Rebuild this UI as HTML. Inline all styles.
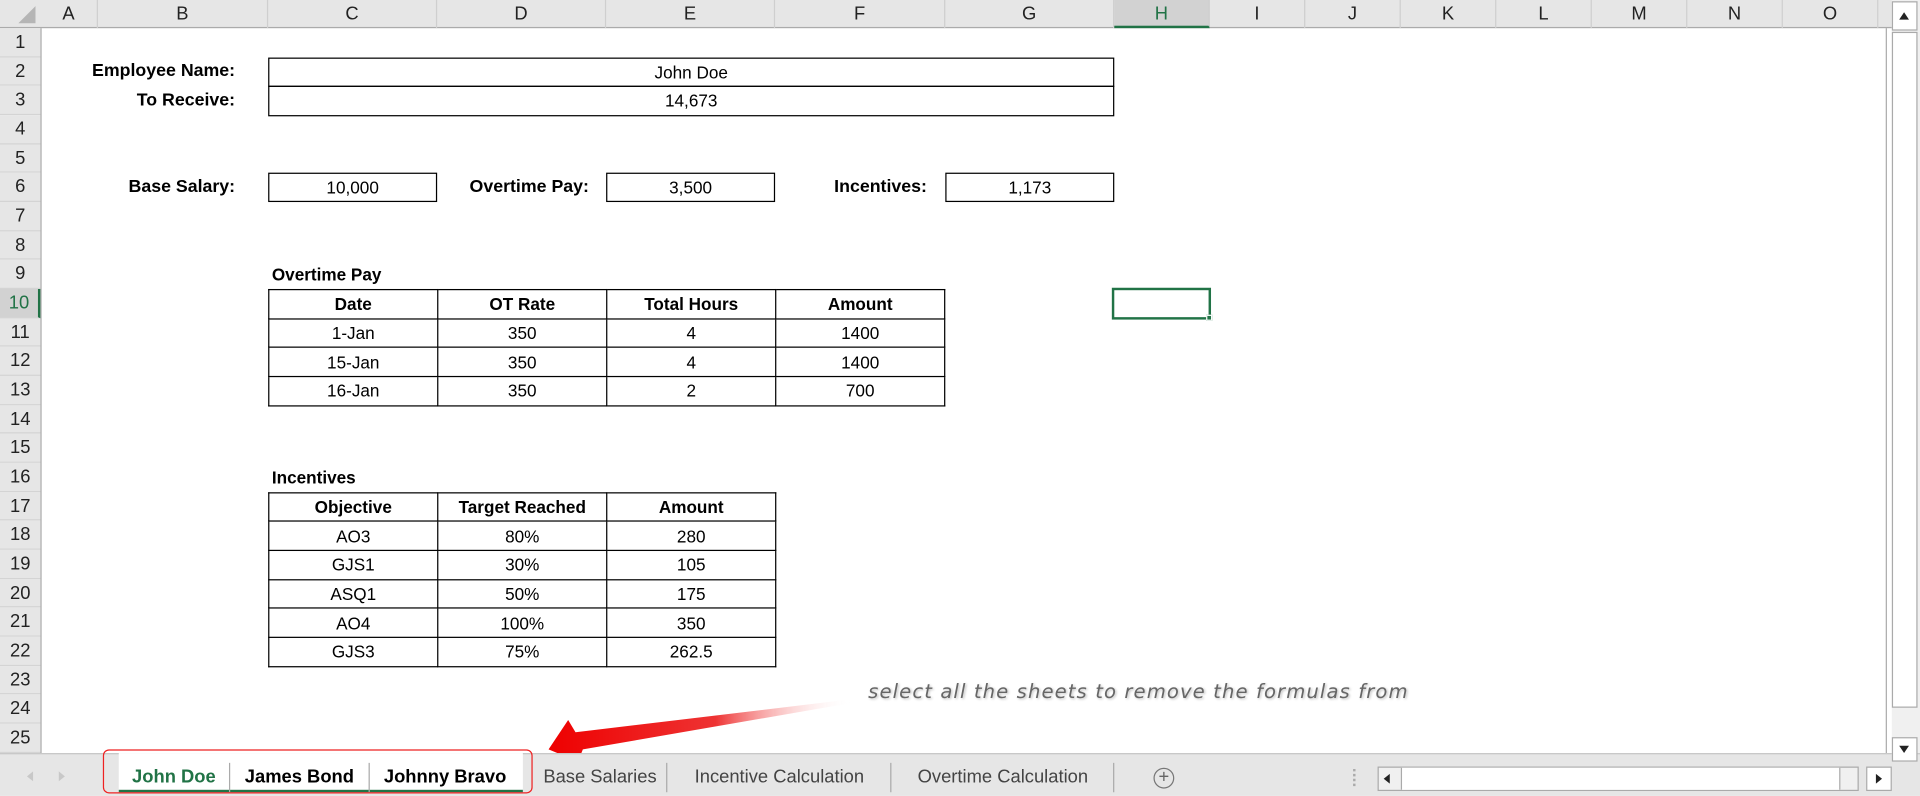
<!DOCTYPE html>
<html><head><meta charset="utf-8"><style>
*{margin:0;padding:0;box-sizing:border-box}
html,body{width:1920px;height:796px;overflow:hidden;background:#fff}
#w{position:absolute;left:0;top:0;width:1568px;height:650px;transform:scale(1.22449);transform-origin:0 0;font-family:"Liberation Sans",sans-serif;font-size:14px;color:#000}
.a{position:absolute}
.ch{position:absolute;top:0;height:23px;border-right:1px solid #cfcfcf;text-align:center;line-height:23px;font-size:15px;color:#222}
.rh{position:absolute;left:0;width:33px;border-bottom:1px solid #d4d4d4;text-align:center;font-size:15px;color:#222;background:#e6e6e6}
.bx{position:absolute;border:1px solid #000;text-align:center;line-height:22px}
.lb{position:absolute;font-weight:bold;text-align:right;line-height:23px;font-size:14.5px}
table{position:absolute;border-collapse:collapse}
td{border:1px solid #000;text-align:center;height:23.67px;padding:0;line-height:20px}
th{border:1px solid #000;height:23.67px;font-weight:bold;padding:0}
.tab{position:absolute;top:623px;height:24px;line-height:24px;font-size:15px;text-align:center}
</style></head><body><div id="w">
<div class="a" style="left:0;top:0;width:1568px;height:23px;background:#e6e6e6;border-bottom:1px solid #ababab"></div>
<div class="a" style="left:15px;top:5px;width:0;height:0;border-left:14px solid transparent;border-bottom:14px solid #b5b5b5"></div>
<div class="ch" style="left:33px;width:47px">A</div>
<div class="ch" style="left:80px;width:139px">B</div>
<div class="ch" style="left:219px;width:138px">C</div>
<div class="ch" style="left:357px;width:138px">D</div>
<div class="ch" style="left:495px;width:138px">E</div>
<div class="ch" style="left:633px;width:139px">F</div>
<div class="ch" style="left:772px;width:138px">G</div>
<div class="ch" style="left:910px;width:78px;background:#d2d2d2;color:#217346;border-bottom:2px solid #217346">H</div>
<div class="ch" style="left:988px;width:78px">I</div>
<div class="ch" style="left:1066px;width:78px">J</div>
<div class="ch" style="left:1144px;width:78px">K</div>
<div class="ch" style="left:1222px;width:78px">L</div>
<div class="ch" style="left:1300px;width:78px">M</div>
<div class="ch" style="left:1378px;width:78px">N</div>
<div class="ch" style="left:1456px;width:78px">O</div>
<div id="rows"></div>
<div class="a" style="left:33px;top:23px;width:1px;height:592px;background:#ababab"></div>
<div class="a" style="left:1540px;top:23px;width:1px;height:592px;background:#ababab"></div>

<div class="lb" style="left:40px;width:152px;top:47px">Employee Name:</div>
<div class="lb" style="left:40px;width:152px;top:71px">To Receive:</div>
<div class="bx" style="left:219px;top:46.7px;width:691px;height:24.6px">John Doe</div>
<div class="bx" style="left:219px;top:70.3px;width:691px;height:24.6px">14,673</div>
<div class="lb" style="left:40px;width:152px;top:142px">Base Salary:</div>
<div class="bx" style="left:219px;top:141.3px;width:138px;height:24px">10,000</div>
<div class="lb" style="left:357px;width:124px;top:142px">Overtime Pay:</div>
<div class="bx" style="left:495px;top:141.3px;width:138px;height:24px">3,500</div>
<div class="lb" style="left:633px;width:124px;top:142px">Incentives:</div>
<div class="bx" style="left:772px;top:141.3px;width:138px;height:24px">1,173</div>

<div class="a" style="left:222px;top:213px;font-weight:bold;line-height:23px">Overtime Pay</div>
<table style="left:219px;top:236px;width:553px">
<tr><th style="width:138px">Date</th><th style="width:138px">OT Rate</th><th style="width:138px">Total Hours</th><th>Amount</th></tr>
<tr><td>1-Jan</td><td>350</td><td>4</td><td>1400</td></tr>
<tr><td>15-Jan</td><td>350</td><td>4</td><td>1400</td></tr>
<tr><td>16-Jan</td><td>350</td><td>2</td><td>700</td></tr>
</table>
<div class="a" style="left:222px;top:379px;font-weight:bold;line-height:23px">Incentives</div>
<table style="left:219px;top:401.7px;width:415px">
<tr><th style="width:138px">Objective</th><th style="width:138px">Target Reached</th><th>Amount</th></tr>
<tr><td>AO3</td><td>80%</td><td>280</td></tr>
<tr><td>GJS1</td><td>30%</td><td>105</td></tr>
<tr><td>ASQ1</td><td>50%</td><td>175</td></tr>
<tr><td>AO4</td><td>100%</td><td>350</td></tr>
<tr><td>GJS3</td><td>75%</td><td>262.5</td></tr>
</table>
<div class="a" style="left:908px;top:235px;width:81px;height:26px;border:2px solid #217346"></div>
<div class="a" style="left:985px;top:257px;width:5px;height:5px;background:#217346;border:1px solid #fff"></div>

<div class="a" style="left:709px;top:555px;font-family:'DejaVu Sans',sans-serif;font-style:italic;font-size:16px;color:#666;text-shadow:1px 1px 2px #bbb;letter-spacing:0.9px;white-space:nowrap">select all the sheets to remove the formulas from</div>
<svg class="a" style="left:440px;top:560px" width="270" height="64"><defs><linearGradient id="g" x1="0" x2="1"><stop offset="0" stop-color="#e00"/><stop offset=".55" stop-color="#e33"/><stop offset="1" stop-color="#fff" stop-opacity="0"/></linearGradient></defs>
<polygon points="8,52 24,28 30,38 256,11 256,14 36,52 32,62" fill="url(#g)"/></svg>

<div class="a" style="left:0;top:615px;width:1568px;height:35px;background:#e6e6e6;border-top:1px solid #c6c6c6"></div>
<div class="a" style="left:22px;top:630px;border-right:5px solid #c8c8c8;border-top:4px solid transparent;border-bottom:4px solid transparent"></div>
<div class="a" style="left:48px;top:630px;border-left:5px solid #c8c8c8;border-top:4px solid transparent;border-bottom:4px solid transparent"></div>
<div class="a" style="left:97px;top:615px;width:330px;height:32px;background:#fff;border-bottom:2px solid #217346"></div>
<div class="tab" style="left:97px;width:90px;color:#217346;font-weight:bold">John Doe</div>
<div class="tab" style="left:187px;width:114px;font-weight:bold;border-left:1px solid #aaa">James Bond</div>
<div class="tab" style="left:301px;width:124px;font-weight:bold;border-left:1px solid #aaa">Johnny Bravo</div>
<div class="a" style="left:84px;top:612px;width:351px;height:36px;border:1.5px solid #e22;border-radius:5px"></div>
<div class="tab" style="left:436px;width:109px;color:#444;border-right:1px solid #aaa">Base Salaries</div>
<div class="tab" style="left:546px;width:182px;color:#444;border-right:1px solid #aaa">Incentive Calculation</div>
<div class="tab" style="left:729px;width:181px;color:#444;border-right:1px solid #aaa">Overtime Calculation</div>
<div class="a" style="left:942px;top:627px;width:17px;height:17px;border:1px solid #777;border-radius:50%;text-align:center;line-height:14px;font-size:15px;color:#666">+</div>
<div class="a" style="left:1105px;top:628px;width:2px;height:14px;border-left:2px dotted #aaa"></div>
<div class="a" style="left:1125px;top:626px;width:393px;height:20px;border:1px solid #aaa;background:#f0f0f0"></div>
<div class="a" style="left:1144px;top:627px;width:359px;height:18px;background:#fff;border-left:1px solid #aaa;border-right:1px solid #aaa"></div>
<div class="a" style="left:1130px;top:632px;border-right:5px solid #222;border-top:4px solid transparent;border-bottom:4px solid transparent"></div>
<div class="a" style="left:1524px;top:626px;width:21px;height:20px;border:1px solid #aaa;background:#fff"></div>
<div class="a" style="left:1532px;top:632px;border-left:5px solid #222;border-top:4px solid transparent;border-bottom:4px solid transparent"></div>
<div class="a" style="left:1545px;top:0;width:23px;height:615px;background:#f0f0f0"></div>
<div class="a" style="left:1545px;top:1px;width:21px;height:24px;border:1px solid #aaa;background:#fff"></div>
<div class="a" style="left:1551px;top:10px;border-bottom:6px solid #222;border-left:4px solid transparent;border-right:4px solid transparent"></div>
<div class="a" style="left:1545px;top:26px;width:21px;height:552px;border:1px solid #aaa;background:#fff"></div>
<div class="a" style="left:1545px;top:602px;width:21px;height:20px;border:1px solid #aaa;background:#fff"></div>
<div class="a" style="left:1551px;top:609px;border-top:6px solid #222;border-left:4px solid transparent;border-right:4px solid transparent"></div>
</div>
<script>
var h='';for(var n=1;n<=25;n++){var t=23+(n-1)*23.67;h+='<div class="rh" style="top:'+t+'px;height:23.67px;line-height:23px;'+(n==10?'background:#d2d2d2;color:#217346;border-right:2px solid #217346;':'')+'">'+n+'</div>';}
h+='<div class="rh" style="top:614.7px;height:1px"></div>';
document.getElementById('rows').outerHTML=h;
</script>
</body></html>
